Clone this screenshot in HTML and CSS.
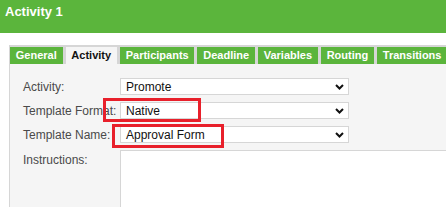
FILE: index.html
```html
<!DOCTYPE html>
<html lang="en">
<head>
    <meta charset="UTF-8">
    <title>Activity 1</title>
    <link rel="stylesheet" href="styles.css">
</head>
<body>
    <div class="header">Activity 1</div>

    <div class="editor">
        <ul class="tabs">
            <li>General</li>
            <li class="active">Activity</li>
            <li>Participants</li>
            <li>Deadline</li>
            <li>Variables</li>
            <li>Routing</li>
            <li>Transitions</li>
        </ul>

        <div class="panel">
            <div class="row">
                <label>Activity:</label>
                <div class="select">
                    <span>Promote</span>
                    <svg width="9" height="6" viewBox="0 0 9 6"><polyline points="1,1 4.5,4.5 8,1" fill="none" stroke="#111" stroke-width="2"/></svg>
                </div>
            </div>
            <div class="row">
                <label>Template Format:</label>
                <div class="select">
                    <span>Native</span>
                    <svg width="9" height="6" viewBox="0 0 9 6"><polyline points="1,1 4.5,4.5 8,1" fill="none" stroke="#111" stroke-width="2"/></svg>
                </div>
            </div>
            <div class="row">
                <label>Template Name:</label>
                <div class="select">
                    <span>Approval Form</span>
                    <svg width="9" height="6" viewBox="0 0 9 6"><polyline points="1,1 4.5,4.5 8,1" fill="none" stroke="#111" stroke-width="2"/></svg>
                </div>
            </div>
            <div class="row top">
                <label>Instructions:</label>
                <div class="textarea"></div>
            </div>
        </div>
    </div>

    <div class="mark mark-format"></div>
    <div class="mark mark-name"></div>
</body>
</html>
```

FILE: styles.css
```css
* {
    margin: 0;
    padding: 0;
    box-sizing: border-box;
    font-family: "Liberation Sans", Arial, sans-serif;
}

body {
    background: white;
    width: 446px;
    height: 207px;
    overflow: hidden;
    position: relative;
}

.header {
    background: #5bb53c;
    color: white;
    font-size: 13px;
    font-weight: bold;
    height: 33px;
    padding: 4px 5px;
    line-height: 15px;
}

.editor {
    margin: 12px 0 0 9px;
    width: 437px;
}

.tabs {
    list-style: none;
    display: flex;
    gap: 3px;
    background: #d6d6d6;
    padding: 2px 0 0 1px;
    overflow: hidden;
}

.tabs li {
    flex-shrink: 0;
    background: #5bb53c;
    color: white;
    font-size: 11px;
    font-weight: bold;
    height: 17px;
    line-height: 17px;
    padding: 0 5.8px;
}

.tabs li.active {
    background: #f5f5f5;
    color: #111;
}

.panel {
    background: #f5f5f5;
    border-left: 1px solid #d6d6d6;
    padding: 14px 0 0 13px;
    height: 143px;
    overflow: hidden;
}

.row {
    display: grid;
    grid-template-columns: 97px 1fr;
    align-items: center;
    margin-bottom: 7px;
}

.row.top {
    align-items: start;
    margin-bottom: 0;
}

.row label {
    font-size: 12px;
    color: #4a4a4a;
}

.row.top label {
    padding-top: 3px;
}

.select {
    width: 229px;
    height: 17px;
    background: white;
    border: 1px solid #d6d6d6;
    display: flex;
    align-items: center;
    justify-content: space-between;
    padding: 0 4px 0 5px;
    font-size: 12px;
    color: #111;
}

.select svg {
    margin-top: 1px;
}

.textarea {
    height: 57px;
    background: white;
    border: 1px solid #d6d6d6;
    border-right: none;
    border-bottom: none;
}

.mark {
    position: absolute;
    border: 3px solid #e8202b;
}

.mark-format {
    left: 103px;
    top: 98px;
    width: 98px;
    height: 24px;
}

.mark-name {
    left: 112px;
    top: 124px;
    width: 112px;
    height: 24px;
}
```
